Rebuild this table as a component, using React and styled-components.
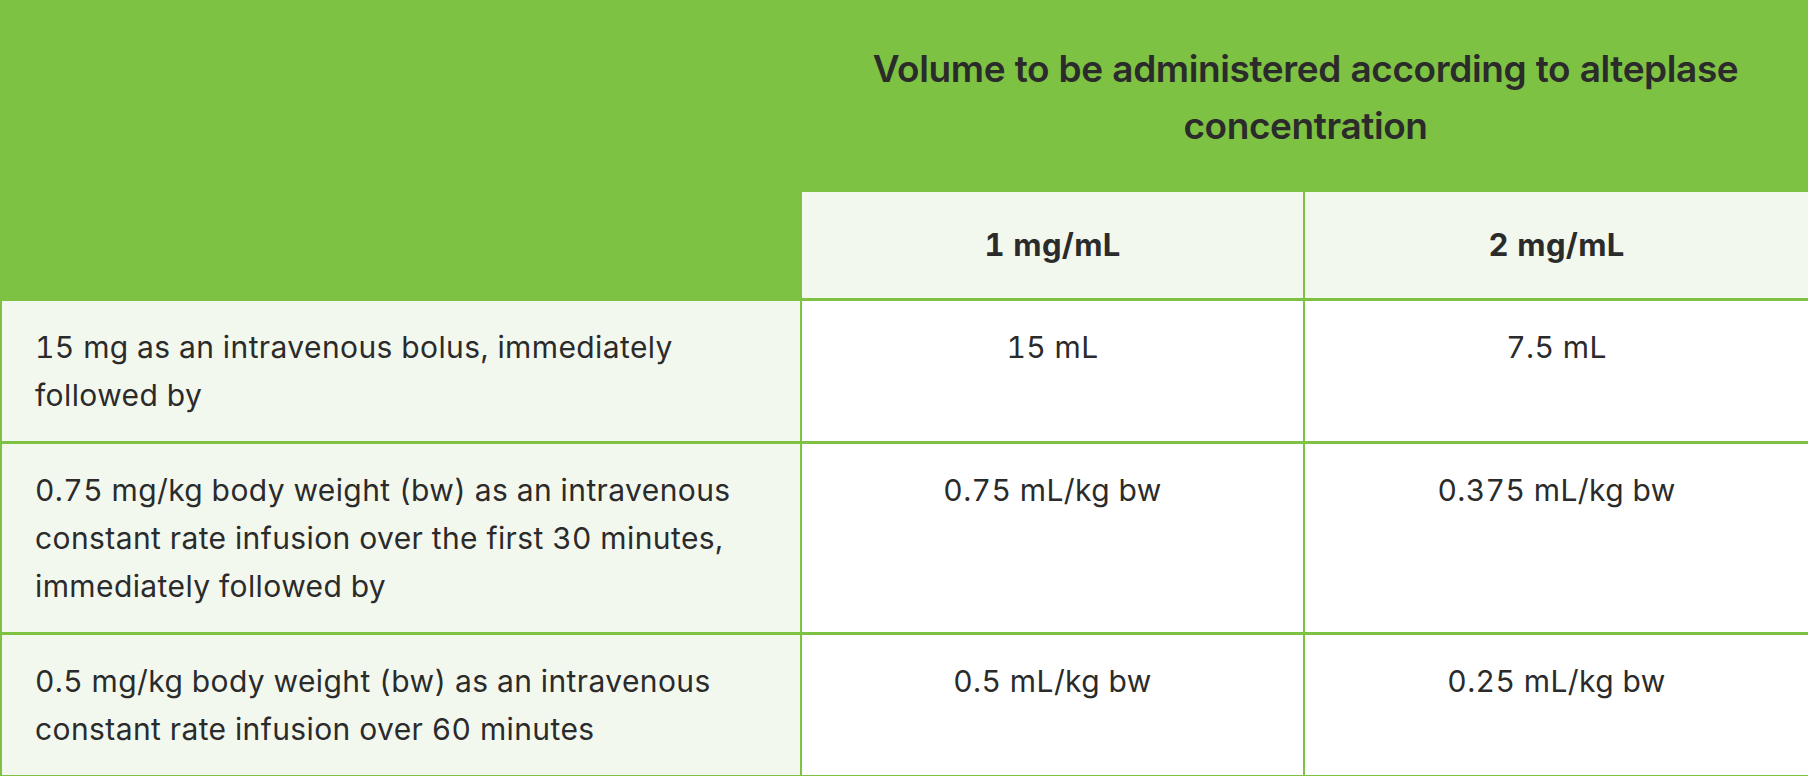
import React from "react";
import styled, { createGlobalStyle } from "styled-components";

const Global = createGlobalStyle`
  html, body { margin: 0; padding: 0; background: #ffffff; }
  body { font-family: Inter, "Noto Sans", sans-serif; color: #2b2b2b; }
`;

const GREEN = "#7dc242";
const LIGHT = "#f3f8ee";

const Table = styled.table`
  width: 1808px;
  border-collapse: collapse;
  table-layout: fixed;
  font-family: Inter, "Noto Sans", sans-serif;
  font-variant-numeric: tabular-nums;
  color: #2b2b2b;
`;

const HeadBlank = styled.th`
  background: ${GREEN};
  border: solid ${GREEN};
  border-width: 0 2px 3px 2px;
`;

const Title = styled.th`
  background: ${GREEN};
  border: 0;
  height: 192px;
  box-sizing: border-box;
  padding: 38px 40px 36px;
  font-size: 37px;
  line-height: 57px;
  font-weight: 600;
  letter-spacing: -0.4px;
  text-align: center;
  vertical-align: middle;
`;

const SubHead = styled.th`
  background: ${LIGHT};
  border: solid ${GREEN};
  border-width: 0 2px 3px 2px;
  height: 107px;
  box-sizing: border-box;
  padding: 0 20px;
  font-size: 31px;
  line-height: 46px;
  font-weight: 700;
  letter-spacing: 0.3px;
  text-align: center;
  vertical-align: middle;
`;

const Cell = styled.td`
  background: ${(p) => (p.$label ? LIGHT : "#ffffff")};
  border: solid ${GREEN};
  border-width: 3px 2px;
  padding: ${(p) => (p.$label ? "22px 40px 22px 33px" : "22px 20px")};
  font-size: 30px;
  line-height: 48px;
  font-weight: 400;
  letter-spacing: 0.4px;
  text-align: ${(p) => (p.$label ? "left" : "center")};
  vertical-align: top;
  height: ${(p) => p.$h}px;
  box-sizing: border-box;
`;

const rows = [
  {
    label: "15 mg as an intravenous bolus, immediately followed by",
    a: "15 mL",
    b: "7.5 mL",
    h: 141,
  },
  {
    label:
      "0.75 mg/kg body weight (bw) as an intravenous constant rate infusion over the first 30 minutes, immediately followed by",
    a: "0.75 mL/kg bw",
    b: "0.375 mL/kg bw",
    h: 190,
  },
  {
    label:
      "0.5 mg/kg body weight (bw) as an intravenous constant rate infusion over 60 minutes",
    a: "0.5 mL/kg bw",
    b: "0.25 mL/kg bw",
    h: 142,
  },
];

export default function App() {
  return (
    <>
      <Global />
      <Table>
        <colgroup>
          <col style={{ width: 800 }} />
          <col style={{ width: 503 }} />
          <col style={{ width: 505 }} />
        </colgroup>
        <thead>
          <tr>
            <HeadBlank rowSpan={2} />
            <Title colSpan={2}>
              Volume to be administered according to alteplase concentration
            </Title>
          </tr>
          <tr>
            <SubHead>1 mg/mL</SubHead>
            <SubHead>2 mg/mL</SubHead>
          </tr>
        </thead>
        <tbody>
          {rows.map((r) => (
            <tr key={r.a}>
              <Cell $label $h={r.h}>{r.label}</Cell>
              <Cell $h={r.h}>{r.a}</Cell>
              <Cell $h={r.h}>{r.b}</Cell>
            </tr>
          ))}
        </tbody>
      </Table>
    </>
  );
}
